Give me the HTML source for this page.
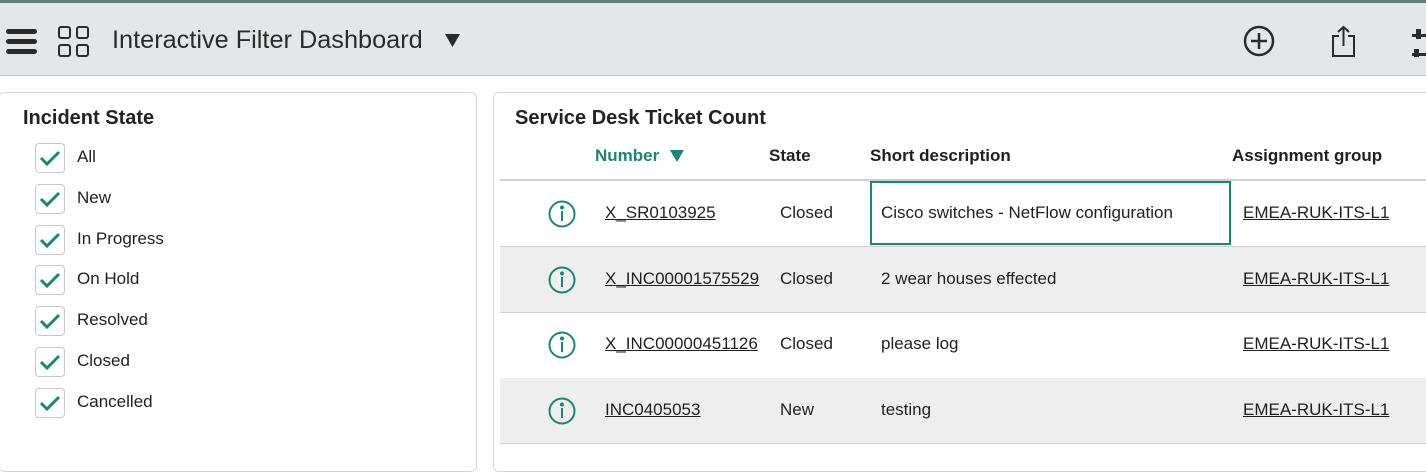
<!DOCTYPE html>
<html><head><style>
*{box-sizing:border-box;margin:0;padding:0}
body{width:1426px;height:459px;overflow:hidden;background:#fff;font-family:"Liberation Sans",sans-serif;color:#1f1f1f;position:relative}
.top{position:absolute;left:0;top:0;width:1426px;height:3px;background:#5b8170}
.bar{position:absolute;left:0;top:3px;width:1426px;height:73px;background:#e4e7ea;border-bottom:1px solid #c4c6c8}
.abs{position:absolute}
.panel{position:absolute;border:1px solid #d6d6d6;border-radius:6px;background:#fff}
.cb{position:absolute;left:35px;width:30px;height:30px;border:1px solid #c8c8c8;border-radius:4px}
.lbl{position:absolute;left:77px;font-size:17px}
.row{position:absolute;left:500px;width:926px;height:66px;border-bottom:1px solid #d0d0d0}
.c{position:absolute;font-size:17px;top:22px}
a{color:#1f1f1f;text-decoration:underline}
</style></head><body>
<div class="top"></div>
<div class="bar">
 <svg class="abs" style="left:6px;top:26px" width="32" height="26"><rect x="0" y="0" width="31" height="5" rx="2.5" fill="#2b2b2b"/><rect x="0" y="10" width="31" height="5" rx="2.5" fill="#2b2b2b"/><rect x="0" y="20" width="31" height="5" rx="2.5" fill="#2b2b2b"/></svg>
 <svg class="abs" style="left:58px;top:23px" width="32" height="32" fill="none" stroke="#2b2b2b" stroke-width="2"><rect x="1" y="1" width="11" height="11" rx="2"/><rect x="19" y="1" width="11" height="11" rx="2"/><rect x="1" y="19" width="11" height="11" rx="2"/><rect x="19" y="19" width="11" height="11" rx="2"/></svg>
 <div class="abs" style="left:112px;top:23px;font-size:25.3px;color:#2b2b2b">Interactive Filter Dashboard</div>
 <svg class="abs" style="left:445px;top:31px" width="16" height="14"><path d="M0 0H15L7.5 13Z" fill="#2b2b2b"/></svg>
 <svg class="abs" style="left:1243px;top:22px" width="32" height="32" fill="none" stroke="#2b2b2b" stroke-width="2.5"><circle cx="16" cy="16" r="14"/><path d="M16 8V24M8 16H24"/></svg>
 <svg class="abs" style="left:1332px;top:22px" width="24" height="32" fill="none" stroke="#2b2b2b" stroke-width="2"><path d="M7 11H1V31H22V11H16M11.5 21V2M6 7L11.5 2L17 7"/></svg>
 <svg class="abs" style="left:1412px;top:24px" width="14" height="30" fill="#2b2b2b"><rect x="0" y="7" width="14" height="3"/><rect x="4" y="2" width="5" height="10"/><rect x="0" y="26" width="14" height="3"/><rect x="2" y="22" width="5" height="10"/></svg>
</div>
<div class="panel" style="left:-2px;top:92px;width:479px;height:380px"></div>
<div class="abs" style="left:23px;top:107px;font-size:20px;font-weight:bold;color:#222">Incident State</div>
<div class="cb" style="top:143px"></div><div class="lbl" style="top:147px">All</div>
<div class="cb" style="top:184px"></div><div class="lbl" style="top:188px">New</div>
<div class="cb" style="top:225px"></div><div class="lbl" style="top:229px">In Progress</div>
<div class="cb" style="top:265px"></div><div class="lbl" style="top:269px">On Hold</div>
<div class="cb" style="top:306px"></div><div class="lbl" style="top:310px">Resolved</div>
<div class="cb" style="top:347px"></div><div class="lbl" style="top:351px">Closed</div>
<div class="cb" style="top:388px"></div><div class="lbl" style="top:392px">Cancelled</div>
<svg class="abs" style="left:35px;top:143px" width="30" height="280" fill="none" stroke="#1f8476" stroke-width="3">
<path d="M6 15L12 21L24 9"/><path d="M6 56L12 62L24 50"/><path d="M6 97L12 103L24 91"/><path d="M6 137L12 143L24 131"/><path d="M6 178L12 184L24 172"/><path d="M6 219L12 225L24 213"/><path d="M6 260L12 266L24 254"/></svg>
<div class="panel" style="left:493px;top:92px;width:950px;height:380px"></div>
<div class="abs" style="left:515px;top:107px;font-size:20px;font-weight:bold;color:#222">Service Desk Ticket Count</div>
<div class="abs" style="left:500px;top:135px;width:926px;height:46px;border-bottom:2px solid #cfcfcf"></div>
<div class="abs" style="left:595px;top:146px;font-size:17px;font-weight:bold;color:#1f8476">Number</div>
<svg class="abs" style="left:670px;top:150px" width="14" height="12"><path d="M0 0H14L7 12Z" fill="#1f8476"/></svg>
<div class="abs" style="left:769px;top:146px;font-size:17px;font-weight:bold">State</div>
<div class="abs" style="left:870px;top:146px;font-size:17px;font-weight:bold">Short description</div>
<div class="abs" style="left:1232px;top:146px;font-size:17px;font-weight:bold">Assignment group</div>

<div class="row" style="top:181px;background:#fff"></div>
<div class="row" style="top:247px;background:#eeeeee"></div>
<div class="row" style="top:313px;background:#fff"></div>
<div class="row" style="top:378px;background:#eeeeee"></div>
<div class="abs" style="left:870px;top:181px;width:361px;height:64px;border:2px solid #1f8476"></div>

<svg class="abs" style="left:548px;top:200px" width="30" height="230" fill="none" stroke="#1f8476" stroke-width="2">
<g><circle cx="14" cy="14" r="12.5"/><path d="M14 11V21"/><circle cx="14" cy="7.5" r="1" fill="#1f8476"/></g>
<g transform="translate(0,66)"><circle cx="14" cy="14" r="12.5"/><path d="M14 11V21"/><circle cx="14" cy="7.5" r="1" fill="#1f8476"/></g>
<g transform="translate(0,131)"><circle cx="14" cy="14" r="12.5"/><path d="M14 11V21"/><circle cx="14" cy="7.5" r="1" fill="#1f8476"/></g>
<g transform="translate(0,197)"><circle cx="14" cy="14" r="12.5"/><path d="M14 11V21"/><circle cx="14" cy="7.5" r="1" fill="#1f8476"/></g>
</svg>

<div class="abs" style="top:203px;left:0;width:1426px">
 <a class="c" style="left:605px;top:0">X_SR0103925</a><span class="c" style="left:780px;top:0">Closed</span><span class="c" style="left:881px;top:0">Cisco switches - NetFlow configuration</span><a class="c" style="left:1243px;top:0">EMEA-RUK-ITS-L1</a>
</div>
<div class="abs" style="top:269px;left:0;width:1426px">
 <a class="c" style="left:605px;top:0">X_INC00001575529</a><span class="c" style="left:780px;top:0">Closed</span><span class="c" style="left:881px;top:0">2 wear houses effected</span><a class="c" style="left:1243px;top:0">EMEA-RUK-ITS-L1</a>
</div>
<div class="abs" style="top:334px;left:0;width:1426px">
 <a class="c" style="left:605px;top:0">X_INC00000451126</a><span class="c" style="left:780px;top:0">Closed</span><span class="c" style="left:881px;top:0">please log</span><a class="c" style="left:1243px;top:0">EMEA-RUK-ITS-L1</a>
</div>
<div class="abs" style="top:400px;left:0;width:1426px">
 <a class="c" style="left:605px;top:0">INC0405053</a><span class="c" style="left:780px;top:0">New</span><span class="c" style="left:881px;top:0">testing</span><a class="c" style="left:1243px;top:0">EMEA-RUK-ITS-L1</a>
</div>
</body></html>
